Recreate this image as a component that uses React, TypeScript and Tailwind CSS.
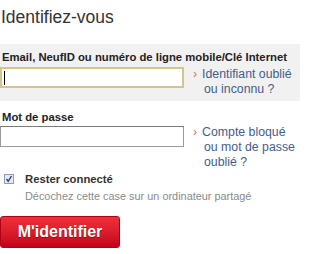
import React from "react";

export default function App() {
  const font = { fontFamily: '"Liberation Sans", Arial, sans-serif' };
  return (
    <div className="w-[300px] h-[254px] bg-white overflow-hidden text-[#333]" style={font}>
      <h1 className="pl-[1px] pt-[7px] h-[44px] text-[17.5px] leading-[20px] text-[#333] font-normal">
        Identifiez-vous
      </h1>
      <div className="bg-[#f1f1f1] h-[57px] pt-[7px]">
        <div className="pl-[2px] text-[11.3px] leading-[13px] font-bold text-[#222] whitespace-nowrap">
          Email, NeufID ou numéro de ligne mobile/Clé Internet
        </div>
        <div className="flex mt-[3px]">
          <div className="w-[184px] h-[21px] border-2 border-[#d4c48e] bg-white flex items-center pl-[2px]">
            <div className="w-[1px] h-[14px] bg-black" />
          </div>
          <div className="ml-[9px] text-[12.3px] leading-[15px] text-[#475d8a]">
            <div>
              <span className="text-[#e06a4f] mr-[5px]">›</span>Identifiant oublié
            </div>
            <div className="pl-[11px]">ou inconnu ?</div>
          </div>
        </div>
      </div>
      <div className="pt-[10px]">
        <div className="pl-[2px] text-[11.3px] leading-[13px] font-bold text-[#222]">Mot de passe</div>
        <div className="flex mt-[1px]">
          <div className="w-[184px] h-[21px] border border-[#9a9a9a] border-t-[#7a7a7a] bg-white mt-[1px]" />
          <div className="ml-[9px] text-[12.3px] leading-[15px] text-[#475d8a]">
            <div>
              <span className="text-[#e06a4f] mr-[5px]">›</span>Compte bloqué
            </div>
            <div className="pl-[11px]">ou mot de passe</div>
            <div className="pl-[11px]">oublié ?</div>
          </div>
        </div>
      </div>
      <div className="flex mt-[3px] pl-[4px]">
        <div className="w-[10px] h-[10px] mt-[1px] border border-[#8e9bb5] bg-[#e4e9f2] flex items-center justify-center">
          <svg width="8" height="8" viewBox="0 0 8 8">
            <path d="M1.5 4 L3.2 6.3 L6.5 1" stroke="#2a3f7a" strokeWidth="1.4" fill="none" />
          </svg>
        </div>
        <div className="ml-[11px]">
          <div className="text-[11.3px] leading-[13px] font-bold text-[#333]">Rester connecté</div>
          <div className="text-[10.9px] leading-[14px] mt-[3px] text-[#8a8a8a]">
            Décochez cette case sur un ordinateur partagé
          </div>
        </div>
      </div>
      <button
        className="mt-[13px] w-[120px] h-[32px] rounded-[3px] bg-gradient-to-b from-[#f0303a] to-[#c4001c] text-white font-bold text-[16px] border border-[#b00018]"
        style={{ ...font, textShadow: "0 1px 1px rgba(80,0,0,0.5)" }}
      >
        M'identifier
      </button>
    </div>
  );
}
